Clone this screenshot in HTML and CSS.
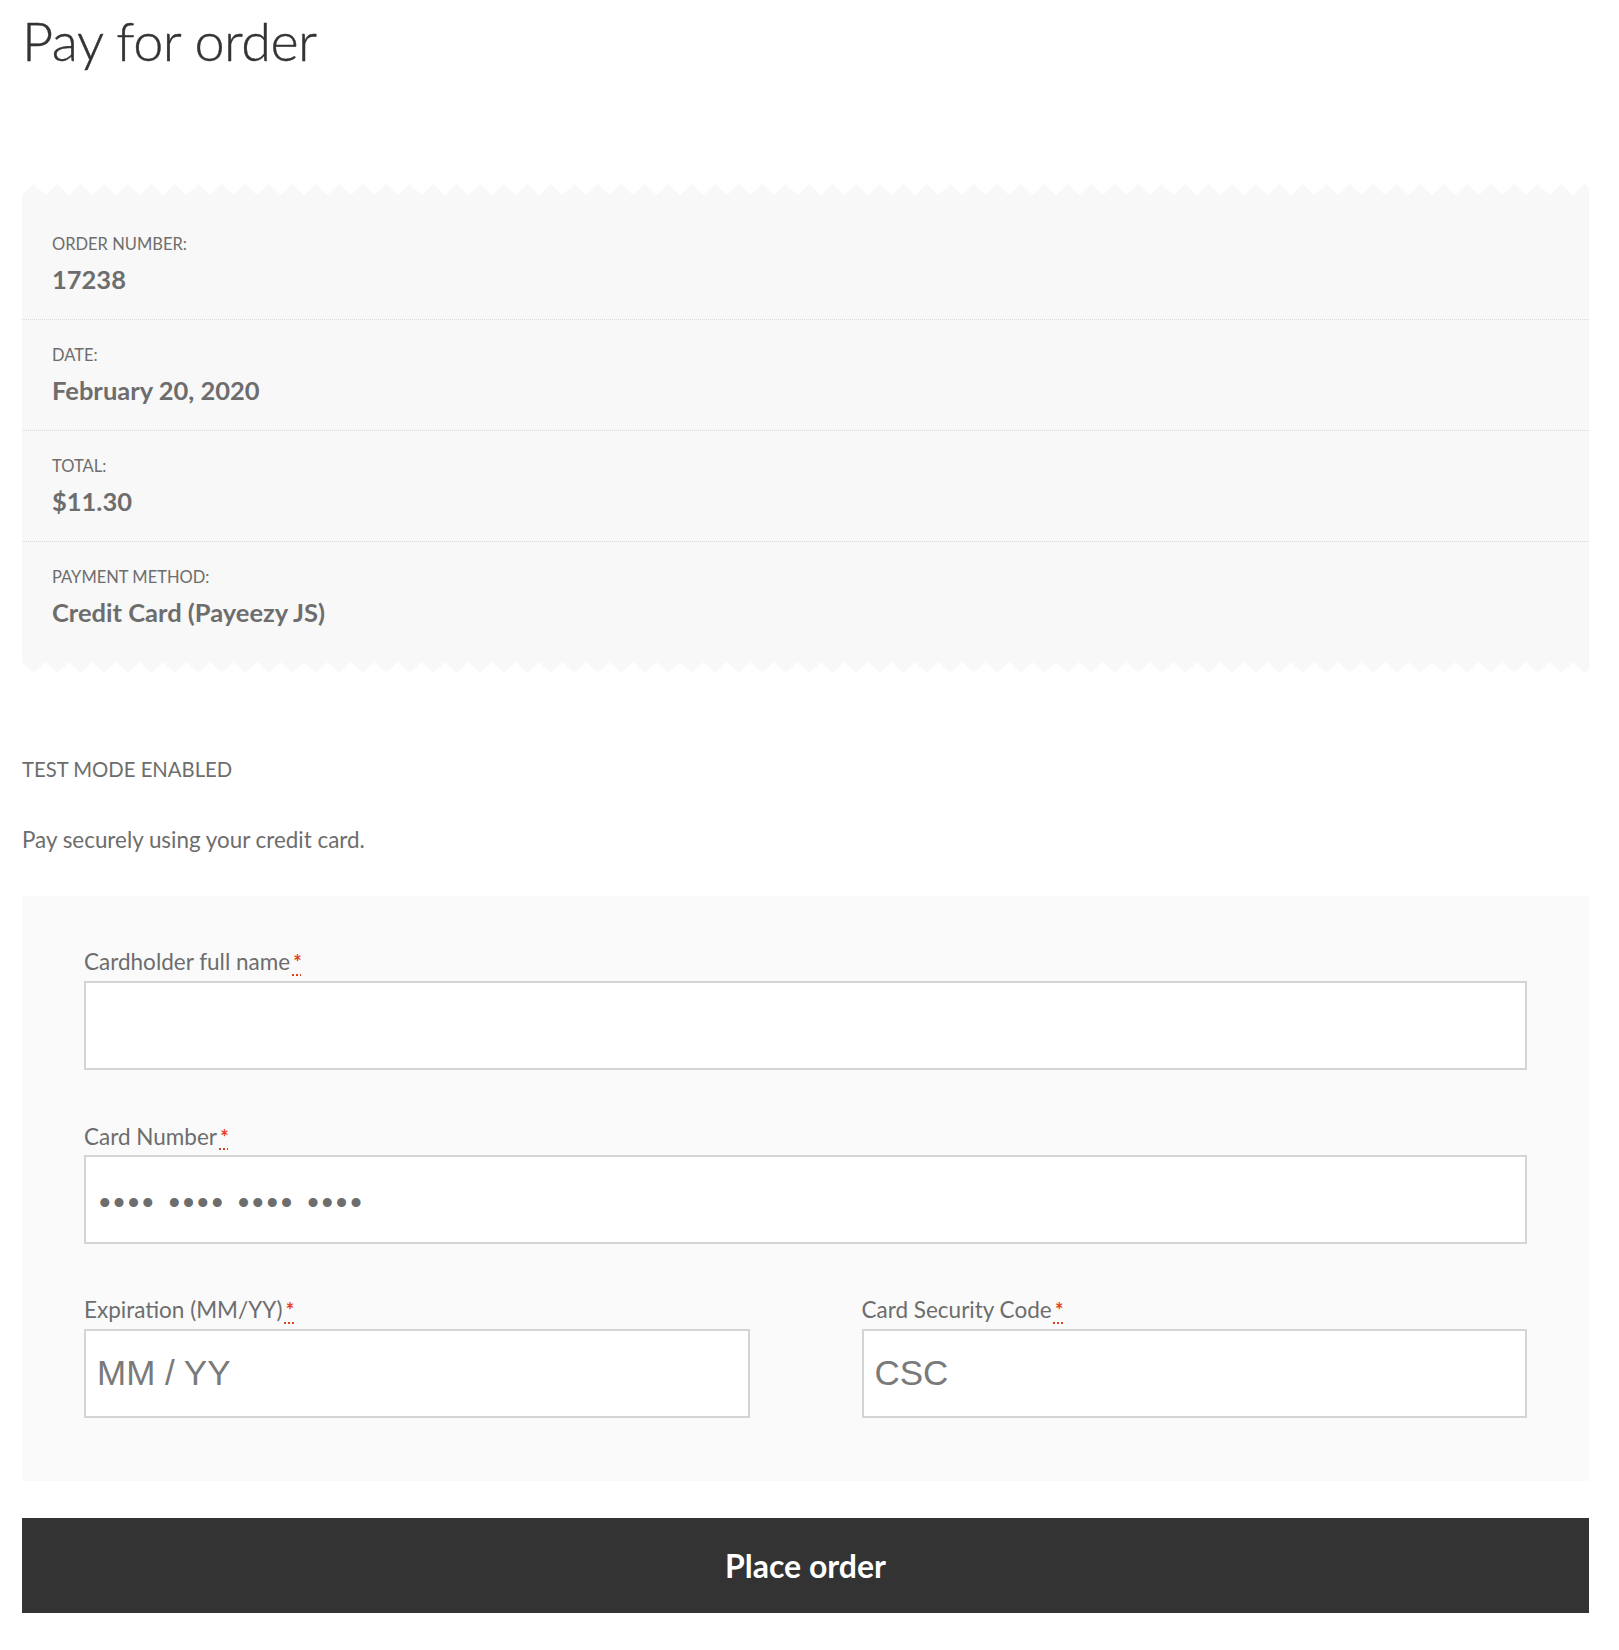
FILE: index.html
```html
<!DOCTYPE html>
<html lang="en">
<head>
<meta charset="utf-8">
<title>Pay for order</title>
<link rel="stylesheet" href="styles.css">
</head>
<body>
<main class="page">
  <h1 class="title">Pay for order</h1>

  <div class="overview">
    <svg class="zig zig-top" aria-hidden="true">
      <defs>
        <pattern id="zt" width="23.5" height="11" patternUnits="userSpaceOnUse">
          <path d="M0 11 L11.75 0 L23.5 11 Z" fill="#f8f8f8"/>
        </pattern>
      </defs>
      <rect width="100%" height="11" fill="url(#zt)"/>
    </svg>
    <ul class="order-details">
      <li class="row"><span class="row-label">Order number:</span><strong class="row-value">17238</strong></li>
      <li class="row"><span class="row-label">Date:</span><strong class="row-value">February 20, 2020</strong></li>
      <li class="row"><span class="row-label">Total:</span><strong class="row-value">$11.30</strong></li>
      <li class="row"><span class="row-label">Payment method:</span><strong class="row-value">Credit Card (Payeezy JS)</strong></li>
    </ul>
    <svg class="zig zig-bottom" aria-hidden="true">
      <defs>
        <pattern id="zb" width="23.5" height="11" patternUnits="userSpaceOnUse">
          <path d="M0 0 L11.75 11 L23.5 0 Z" fill="#f8f8f8"/>
        </pattern>
      </defs>
      <rect width="100%" height="11" fill="url(#zb)"/>
    </svg>
  </div>

  <p class="notice test-mode">TEST MODE ENABLED</p>
  <p class="notice description">Pay securely using your credit card.</p>

  <form class="payment-box">
    <div class="field">
      <label class="field-label">Cardholder full name<abbr class="required" title="required">&#8202;*</abbr></label>
      <div class="input"></div>
    </div>
    <div class="field">
      <label class="field-label">Card Number<abbr class="required" title="required">&#8202;*</abbr></label>
      <div class="input"><span class="placeholder dots">•••• •••• •••• ••••</span></div>
    </div>
    <div class="field-row">
      <div class="field">
        <label class="field-label">Expiration (MM/YY)<abbr class="required" title="required">&#8202;*</abbr></label>
        <div class="input"><span class="placeholder">MM / YY</span></div>
      </div>
      <div class="field">
        <label class="field-label">Card Security Code<abbr class="required" title="required">&#8202;*</abbr></label>
        <div class="input"><span class="placeholder">CSC</span></div>
      </div>
    </div>
  </form>

  <button class="place-order" type="button">Place order</button>
</main>
</body>
</html>
```

FILE: styles.css
```css
* {
  box-sizing: border-box;
}

html, body {
  margin: 0;
  padding: 0;
  background: #ffffff;
}

body {
  font-family: "Lato", "Liberation Sans", sans-serif;
  color: #6d6d6d;
}

.page {
  padding: 0 30px 40px 22px;
}

.title {
  margin: 0;
  padding-top: 14px;
  font-family: "Lato", "Liberation Sans", sans-serif;
  font-weight: 300;
  font-size: 54px;
  line-height: 54px;
  color: #333333;
  letter-spacing: -0.5px;
  -webkit-text-stroke: 0.4px #333333;
}

.overview {
  position: relative;
  margin-top: 127px;
  background: #f8f8f8;
}

.zig {
  position: absolute;
  left: 0;
  width: 100%;
  height: 11px;
  display: block;
}

.zig-top {
  top: -11px;
}

.zig-bottom {
  bottom: -11px;
}

.order-details {
  list-style: none;
  margin: 0;
  padding: 14px 0 10px;
}

.row {
  display: flex;
  flex-direction: column;
  align-items: flex-start;
  padding: 23px 30px 23px;
  border-bottom: 1px dotted #dadada;
}

.row:last-child {
  border-bottom: 0;
}

.row-label {
  text-transform: uppercase;
  font-size: 16.5px;
  line-height: 24px;
}

.row-value {
  margin-top: 6px;
  font-size: 25.5px;
  line-height: 34px;
  font-weight: 700;
}

.notice {
  margin: 0;
  line-height: 31.5px;
}

.test-mode {
  margin-top: 92px;
  font-size: 20.3px;
}

.description {
  margin-top: 38px;
  font-size: 22.4px;
}

.payment-box {
  margin-top: 41px;
  background: #fafafa;
  padding: 50px 62px 63px;
  display: flex;
  flex-direction: column;
}

.payment-box > .field + .field {
  margin-top: 51px;
}

.payment-box > .field-row {
  margin-top: 50px;
}

.field {
  display: flex;
  flex-direction: column;
}

.field-label {
  font-size: 22.5px;
  line-height: 31.5px;
  margin-bottom: 2px;
}

.required {
  color: #e2401c;
  text-decoration: underline dotted #e2401c;
  text-underline-offset: 4px;
  font-weight: 700;
  font-size: 20px;
  padding-left: 2px;
}

.input {
  height: 89px;
  background: #ffffff;
  border: 2px solid #d4d4d4;
  display: flex;
  align-items: center;
  padding: 0 11px;
}

.placeholder {
  font-family: "Liberation Sans", Arial, sans-serif;
  font-size: 35px;
  color: #7a7a7a;
}

.placeholder.dots {
  color: #6d6d6d;
  font-size: 33px;
  letter-spacing: 2.8px;
  padding-top: 6px;
  padding-left: 2px;
}

.field-row {
  display: grid;
  grid-template-columns: 1fr 1fr;
  column-gap: 112px;
}

.place-order {
  display: block;
  width: 100%;
  margin-top: 37px;
  height: 95px;
  border: 0;
  background: #333333;
  color: #ffffff;
  font-family: "Lato", "Liberation Sans", sans-serif;
  font-weight: 700;
  font-size: 32px;
  cursor: pointer;
}
```
